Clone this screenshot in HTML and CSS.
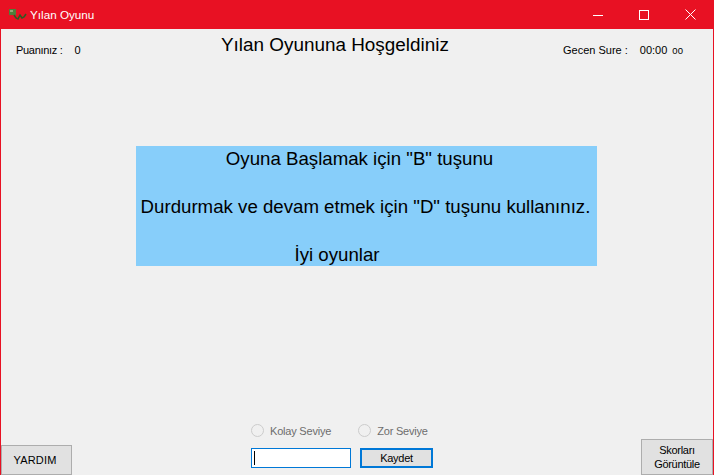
FILE: index.html
```html
<!DOCTYPE html>
<html>
<head>
  <title>Yılan Oyunu</title>
  <meta charset="utf-8">
  <link rel="stylesheet" href="styles.css">
</head>
<body>
  <div class="window">
    <div class="titlebar">
      <svg class="app-icon" width="18" height="12" viewBox="0 0 18 12">
        <rect x="0" y="0" width="7" height="6" fill="#4f7f3a"/>
        <rect x="1" y="1" width="3" height="2" fill="#8fa878"/>
        <path d="M5 6 L7 9 L9 10 L11 6 L13 9 L15 8 L17 5" fill="none" stroke="#2f5a22" stroke-width="1.6"/>
      </svg>
      <span class="title">Yılan Oyunu</span>
      <div class="controls">
        <span class="ctl">
          <svg width="10" height="10" viewBox="0 0 10 10"><path d="M0 5.5H10" stroke="#fff"/></svg>
        </span>
        <span class="ctl">
          <svg width="10" height="10" viewBox="0 0 10 10"><rect x="0.5" y="0.5" width="9" height="9" fill="none" stroke="#fff"/></svg>
        </span>
        <span class="ctl">
          <svg width="11" height="11" viewBox="0 0 11 11"><path d="M0.5 0.5L10.5 10.5M10.5 0.5L0.5 10.5" stroke="#fff"/></svg>
        </span>
      </div>
    </div>

    <div class="content">
      <div class="top-row">
        <div class="score">
          <span class="lbl">Puanınız :</span>
          <span class="lbl">0</span>
        </div>
        <h1 class="heading">Yılan Oyununa Hoşgeldiniz</h1>
        <div class="time">
          <span class="lbl">Gecen Sure :</span>
          <span class="lbl clock">00:00</span>
          <span class="lbl ms">00</span>
        </div>
      </div>

      <div class="info">
        <p class="line first">Oyuna Başlamak için "B" tuşunu</p>
        <p class="line second">Durdurmak ve devam etmek için "D" tuşunu kullanınız.</p>
        <p class="line last">İyi oyunlar</p>
      </div>

      <div class="bottom-row">
        <button class="btn help">YARDIM</button>
        <div class="save-box">
          <div class="levels">
            <label class="level"><span class="radio"></span>Kolay Seviye</label>
            <label class="level"><span class="radio"></span>Zor Seviye</label>
          </div>
          <div class="save-row">
            <div class="name-input"><span class="caret"></span></div>
            <button class="btn save">Kaydet</button>
          </div>
        </div>
        <button class="btn scores">Skorları<br>Görüntüle</button>
      </div>
    </div>
  </div>
</body>
</html>
```

FILE: styles.css
```css
* {
  box-sizing: border-box;
}

body {
  margin: 0;
  width: 714px;
  height: 475px;
  overflow: hidden;
  font-family: "Liberation Sans", Arial, sans-serif;
  background: #f0f0f0;
  color: #000;
}

.window {
  display: flex;
  flex-direction: column;
  height: 475px;
  border-left: 1px solid #e81123;
  border-right: 1px solid #e81123;
}

/* Title bar */
.titlebar {
  display: flex;
  align-items: center;
  height: 29px;
  margin: 0 -1px;
  padding-left: 9px;
  background: #e81123;
  color: #fff;
  font-size: 11.7px;
}

.app-icon {
  margin-right: 3px;
}

.controls {
  display: flex;
  margin-left: auto;
  margin-right: 1px;
}

.ctl {
  display: flex;
  align-items: center;
  justify-content: center;
  width: 46px;
  height: 29px;
}

/* Content */
.content {
  display: flex;
  flex-direction: column;
  flex: 1;
}

.top-row {
  display: flex;
  flex: none;
  height: 117px;
  font-size: 11px;
}

.lbl {
  color: #000;
}

.score {
  display: flex;
  gap: 12px;
  width: 220px;
  padding: 15px 0 0 15px;
  letter-spacing: -0.3px;
}

.heading {
  margin: 4px 0 0;
  width: 342px;
  font-size: 18.9px;
  font-weight: normal;
  line-height: 24px;
}

.time {
  display: flex;
  align-items: baseline;
  padding-top: 15px;
}

.clock {
  margin-left: 12px;
}

.ms {
  margin-left: 5px;
  font-size: 9.5px;
}

.info {
  display: flex;
  flex: none;
  flex-direction: column;
  width: 461px;
  height: 120px;
  margin-left: 135px;
  background: #87cefa;
  text-align: center;
  font-size: 18.67px;
}

.line {
  flex: none;
  margin: 0;
  height: 48px;
  line-height: 26px;
}

.line.first {
  padding-right: 14px;
}

.line.second {
  padding-right: 2px;
}

.line.last {
  height: 24px;
  padding-right: 59px;
}

/* Bottom */
.bottom-row {
  display: flex;
  align-items: flex-end;
  flex: 1;
}

.btn {
  padding: 0;
  border: 1px solid #adadad;
  background: #e1e1e1;
  color: #000;
  font-family: inherit;
  font-size: 11px;
}

.help {
  width: 71px;
  height: 30px;
  padding-right: 3px;
  letter-spacing: 0.2px;
}

.save-box {
  width: 569px;
  padding: 0 0 7px 179px;
}

.levels {
  display: flex;
  gap: 27px;
  margin-bottom: 11px;
}

.level {
  display: flex;
  align-items: center;
  gap: 6px;
  color: #6d6d6d;
  font-size: 11px;
  letter-spacing: -0.2px;
}

.radio {
  width: 13px;
  height: 13px;
  border: 1px solid #cccccc;
  border-radius: 50%;
  background: #f0f0f0;
}

.save-row {
  display: flex;
  gap: 9px;
}

.name-input {
  display: flex;
  align-items: center;
  width: 100px;
  height: 20px;
  padding-left: 2px;
  border: 1px solid #0078d7;
  background: #fff;
}

.caret {
  width: 1px;
  height: 14px;
  background: #000;
}

.save {
  width: 73px;
  height: 20px;
  border: 2px solid #0078d7;
  letter-spacing: -0.3px;
}

.scores {
  width: 72px;
  height: 36px;
  font-size: 11px;
  line-height: 14px;
  letter-spacing: -0.3px;
}
```
